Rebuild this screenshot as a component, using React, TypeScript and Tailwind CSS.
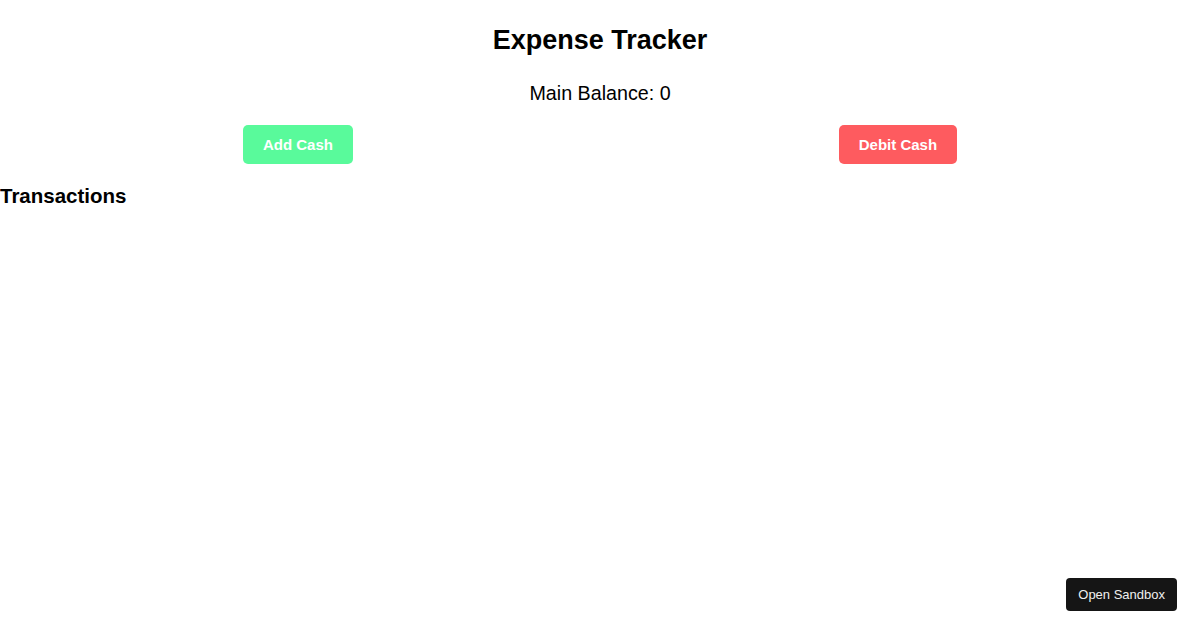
const App = () => {
  return (
    <div className="min-h-screen bg-white text-black font-['Liberation_Sans',Arial,sans-serif]">
      <h1 className="pt-6 text-center text-[27px] leading-8 font-bold">Expense Tracker</h1>
      <p className="mt-[23px] text-center text-[19.7px] leading-7">Main Balance: 0</p>

      <div className="mt-[18px] flex justify-around">
        <button className="h-[39px] px-5 pt-px rounded-[5px] bg-[#59fa9b] text-white text-[15px] font-bold">
          Add Cash
        </button>
        <button className="h-[39px] px-5 pt-px rounded-[5px] bg-[#fe5b5f] text-white text-[15px] font-bold">
          Debit Cash
        </button>
      </div>

      <h3 className="mt-[18px] text-[20.5px] leading-7 font-bold">Transactions</h3>

      {/* sandbox badge */}
      <button className="fixed right-[23px] bottom-[19px] h-[33px] px-3 rounded-[4px] bg-[#151515] text-[#f0f0f0] text-[13px]">
        Open Sandbox
      </button>
    </div>
  );
};

export default App;
